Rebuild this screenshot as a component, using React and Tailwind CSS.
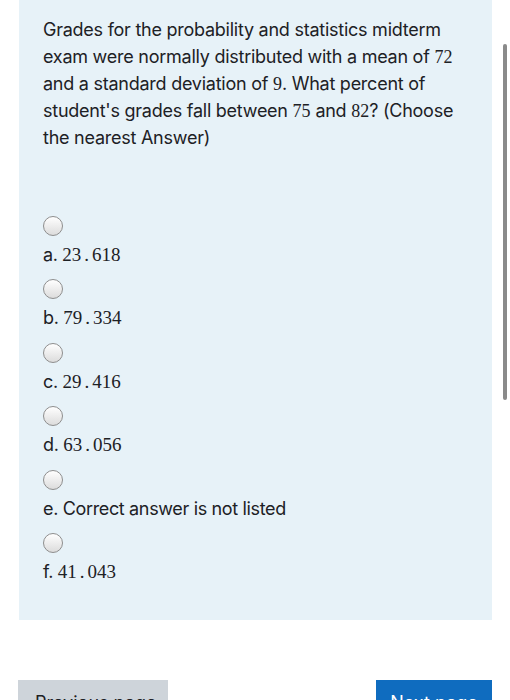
import React from "react";

const sans = { fontFamily: "Inter, 'Liberation Sans', Arial, sans-serif" };

function Num({ a, b }) {
  return (
    <span className="font-['Liberation_Serif',serif] text-[19px] leading-none tracking-normal">
      {a}
      <span className="mx-[3px]">.</span>
      {b}
    </span>
  );
}

function Radio() {
  return (
    <span className="block h-[20px] w-[20px] rounded-full border border-[#8e8e8e] bg-gradient-to-b from-[#ffffff] to-[#dcdcdc]" />
  );
}

const options = [
  { l: "a.", a: "23", b: "618" },
  { l: "b.", a: "79", b: "334" },
  { l: "c.", a: "29", b: "416" },
  { l: "d.", a: "63", b: "056" },
  { l: "e.", text: "Correct answer is not listed" },
  { l: "f.", a: "41", b: "043" },
];

const serif = "font-['Liberation_Serif',serif] leading-none tracking-normal";

export default function App() {
  return (
    <div className="relative h-[700px] w-[510px] overflow-hidden bg-white text-[#1d2125]" style={sans}>
      <div className="ml-[19px] h-[620px] w-[473px] bg-[#e7f2f8] pl-[24px] pr-[30px] pt-[16px]">
        <p className="text-[18px] leading-[27px] tracking-[-0.25px]">
          Grades for the probability and statistics midterm exam were normally distributed with a mean of{" "}
          <span className={serif}>72</span> and a standard deviation of{" "}
          <span className={serif}>9</span>. What percent of student's grades
          fall between <span className={serif}>75</span> and{" "}
          <span className={serif}>82</span>? (Choose the nearest Answer)
        </p>
        <div className="mt-[65px] flex flex-col">
          {options.map((o) => (
            <div key={o.l} className="h-[63.4px]">
              <Radio />
              <div className="mt-[7px] text-[18px] leading-[24px] tracking-[-0.35px]">
                {o.l}{" "}
                {o.text ? o.text : <Num a={o.a} b={o.b} />}
              </div>
            </div>
          ))}
        </div>
      </div>
      <div className="mt-[60px] flex justify-between px-[18px]">
        <button className="h-[44px] w-[150px] bg-[#ced4da] pl-[17px] text-left text-[18px] text-[#1d2125]">
          Previous page
        </button>
        <button className="h-[44px] w-[116px] bg-[#0f6cbf] text-center text-[18px] text-white">
          Next page
        </button>
      </div>
      <div className="absolute left-[503px] top-[44px] h-[356px] w-[4px] rounded-full bg-[#8a8a8a]" />
    </div>
  );
}
